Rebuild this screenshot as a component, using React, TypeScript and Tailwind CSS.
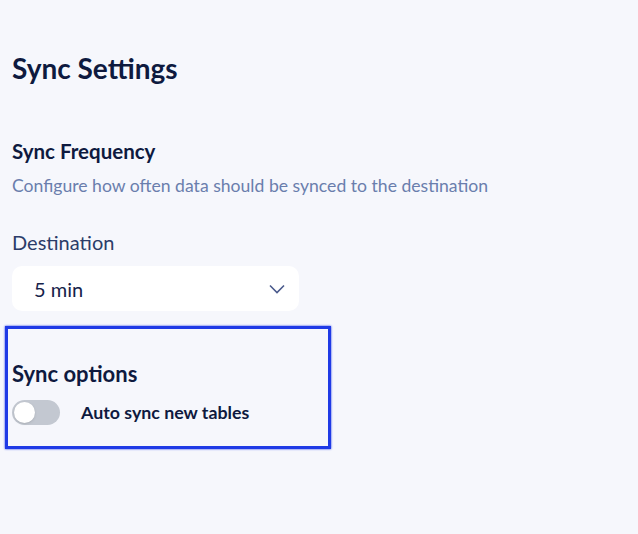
import { useState } from "react";

const heading = { fontFamily: "Lato, 'Noto Sans', sans-serif" };
const body = { fontFamily: "Lato, 'Open Sans', sans-serif" };

function Toggle({ on, onChange }: { on: boolean; onChange: (v: boolean) => void }) {
  return (
    <button
      type="button"
      onClick={() => onChange(!on)}
      className={`relative h-[25px] w-[48px] shrink-0 rounded-full ${on ? "bg-[#3b5bdb]" : "bg-[#c3c8d1]"}`}
    >
      <span
        className={`absolute top-[2px] h-[21px] w-[21px] rounded-full bg-white shadow-sm ${on ? "left-[25px]" : "left-[2px]"}`}
      />
    </button>
  );
}

export default function App() {
  const [auto, setAuto] = useState(false);
  return (
    <div className="min-h-[534px] w-full bg-[#f6f7fc] px-3 pt-[52px]" style={body}>
      <h1 className="text-[28px] font-bold leading-[32px] text-[#0e1a3f]" style={heading}>
        Sync Settings
      </h1>

      <h2 className="mt-[53px] text-[20.5px] font-bold leading-[28px] text-[#0e1a3f]" style={heading}>
        Sync Frequency
      </h2>
      <p className="mt-[9px] text-[17.6px] leading-[24px] text-[#6a7ead]">
        Configure how often data should be synced to the destination
      </p>

      <div className="mt-[32px] text-[20px] leading-[24px] text-[#2b3c69]">Destination</div>
      <div className="mt-[12px] flex h-[45px] w-[287px] items-center justify-between rounded-[10px] bg-white pl-[22px] pr-[14px]">
        <span className="text-[20px] text-[#16224a]">5 min</span>
        <svg width="16" height="10" viewBox="0 0 16 10" fill="none">
          <path d="M1 1.5L8 8.5L15 1.5" stroke="#4a5a8c" strokeWidth="1.6" />
        </svg>
      </div>

      <div className="-ml-[7px] mt-[15px] w-[326px] border-[3px] border-[#1f3ae6] pb-[21px] pl-[4px] pt-[31px] shadow-[0_0_2px_#1f3ae6]">
        <h3 className="text-[22px] font-bold leading-[28px] text-[#0e1a3f]" style={heading}>
          Sync options
        </h3>
        <div className="mt-[12px] flex items-center gap-[21px]">
          <Toggle on={auto} onChange={setAuto} />
          <span className="text-[17.8px] font-bold leading-[25px] text-[#0e1a3f]">Auto sync new tables</span>
        </div>
      </div>
    </div>
  );
}
